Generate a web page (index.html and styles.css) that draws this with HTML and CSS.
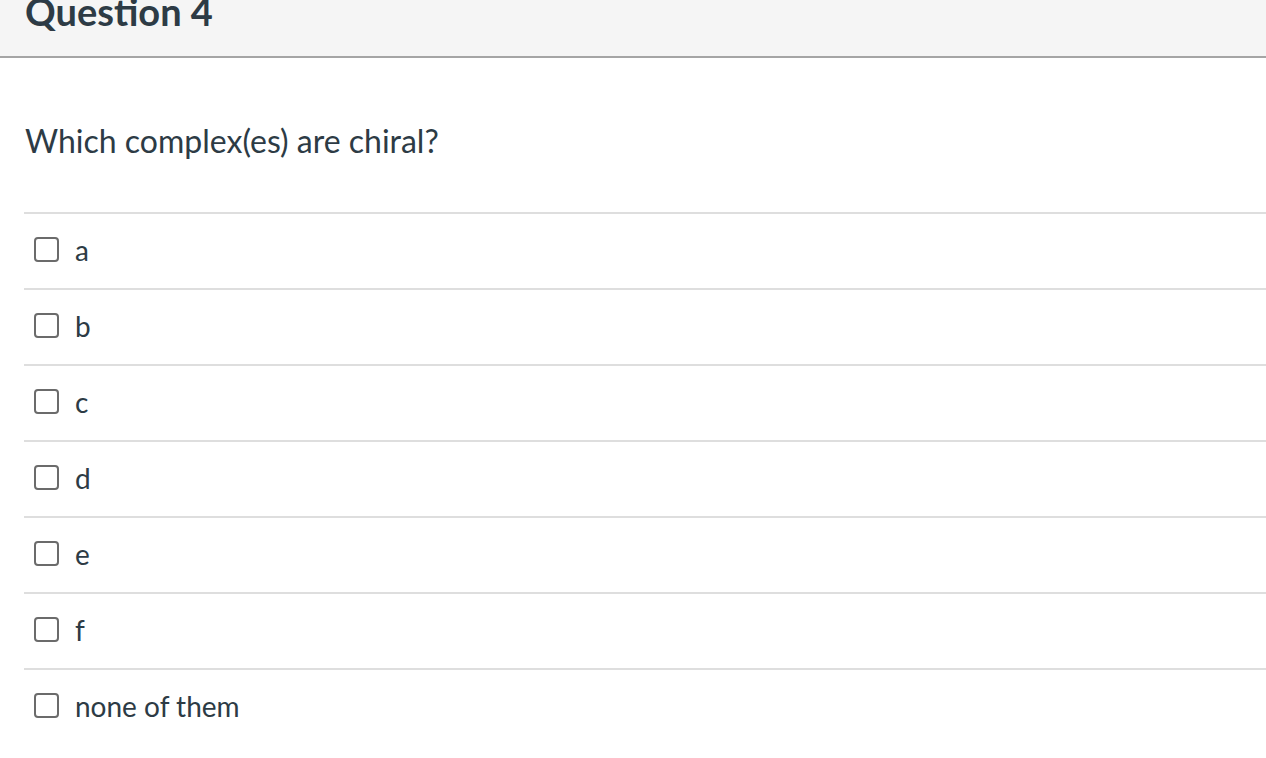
FILE: index.html
```html
<!DOCTYPE html>
<html>
<head>
<meta charset="utf-8">
<link rel="stylesheet" href="styles.css">
</head>
<body>
<div class="header"><h2 class="title">Question 4</h2></div>
<div class="body">
  <p class="question">Which complex(es) are chiral?</p>
  <div class="answers">
    <label class="answer"><span class="box"></span><span class="txt">a</span></label>
    <label class="answer"><span class="box"></span><span class="txt">b</span></label>
    <label class="answer"><span class="box"></span><span class="txt">c</span></label>
    <label class="answer"><span class="box"></span><span class="txt">d</span></label>
    <label class="answer"><span class="box"></span><span class="txt">e</span></label>
    <label class="answer"><span class="box"></span><span class="txt">f</span></label>
    <label class="answer"><span class="box"></span><span class="txt">none of them</span></label>
  </div>
</div>
</body>
</html>
```

FILE: styles.css
```css
html, body {
  margin: 0;
  padding: 0;
  background: #fff;
  font-family: Lato, "Open Sans", sans-serif;
  color: #2d3b45;
  overflow: hidden;
}
.header {
  height: 56px;
  background: #f5f5f5;
  border-bottom: 2px solid #a5a5a5;
  padding-left: 25px;
  overflow: hidden;
}
.title {
  margin: 0;
  font-size: 38px;
  font-weight: 700;
  line-height: 38px;
  margin-top: -8px;
}
.body {
  padding-left: 24px;
}
.question {
  margin: 0;
  padding-top: 65px;
  font-size: 32px;
  line-height: 36px;
  height: 89px;
  padding-left: 1px;
}
.answers {
  display: flex;
  flex-direction: column;
}
.answer {
  display: flex;
  align-items: center;
  border-top: 2px solid #dedede;
  padding-left: 10px;
  padding-bottom: 3px;
  box-sizing: border-box;
  height: 76px;
}
.box {
  width: 21px;
  height: 21px;
  border: 2px solid #6b6b6b;
  border-radius: 4px;
  margin-right: 16px;
}
.txt {
  font-size: 28px;
}
```
